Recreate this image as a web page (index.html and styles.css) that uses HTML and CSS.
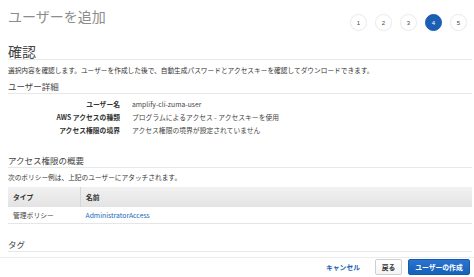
FILE: index.html
```html
<!DOCTYPE html>
<html>
<head>
  <title>ユーザーを追加</title>
  <link rel="stylesheet" href="styles.css">
</head>
<body>

  <div class="header">
    <h1>ユーザーを追加</h1>
    <div class="steps">
      <span class="step">1</span>
      <span class="step">2</span>
      <span class="step">3</span>
      <span class="step active">4</span>
      <span class="step">5</span>
    </div>
  </div>

  <div class="content">
    <h2>確認</h2>
    <p class="desc">選択内容を確認します。ユーザーを作成した後で、自動生成パスワードとアクセスキーを確認してダウンロードできます。</p>

    <h3>ユーザー詳細</h3>
    <div class="details">
      <div class="label">ユーザー名</div>
      <div class="value">amplify-cli-zuma-user</div>
      <div class="label">AWS アクセスの種類</div>
      <div class="value">プログラムによるアクセス - アクセスキーを使用</div>
      <div class="label">アクセス権限の境界</div>
      <div class="value">アクセス権限の境界が設定されていません</div>
    </div>

    <h3 class="perm">アクセス権限の概要</h3>
    <p class="desc small">次のポリシー例は、上記のユーザーにアタッチされます。</p>
    <table class="policies">
      <tr>
        <th class="col-type">タイプ</th>
        <th>名前</th>
      </tr>
      <tr>
        <td>管理ポリシー</td>
        <td><a href="#">AdministratorAccess</a></td>
      </tr>
    </table>

    <h3 class="tags">タグ</h3>
  </div>

  <div class="footer">
    <a href="#" class="cancel">キャンセル</a>
    <button class="btn back">戻る</button>
    <button class="btn primary">ユーザーの作成</button>
  </div>

</body>
</html>
```

FILE: styles.css
```css
body {
  margin: 0;
  font-family: "Noto Sans CJK JP", "Liberation Sans", sans-serif;
  color: #333;
  background: #fff;
  width: 474px;
  height: 277px;
  overflow: hidden;
}
.header {
  display: flex;
  justify-content: space-between;
  align-items: flex-start;
  height: 40px;
  padding: 0 7px 0 8px;
}
h1 {
  margin: 7px 0 0;
  font-size: 14px;
  line-height: 18px;
  font-weight: normal;
  color: #8c8c8c;
}
.steps {
  display: flex;
  gap: 8px;
  margin-top: 14px;
}
.step {
  box-sizing: border-box;
  width: 17px;
  height: 17px;
  border: 1px solid #ececec;
  border-radius: 50%;
  font-size: 6px;
  font-family: "Liberation Sans", sans-serif;
  display: flex;
  align-items: center;
  justify-content: center;
  color: #444;
  background: #fff;
  box-shadow: 0 0 1px #f2f2f2;
}
.step.active {
  background: #1a5fb4;
  border-color: #1a5fb4;
  color: #fff;
}
.content {
  padding: 0 2px 0 8px;
}
h2 {
  margin: 3px 0 0;
  font-size: 14px;
  line-height: 16px;
  font-weight: normal;
  color: #444;
  border-bottom: 1px solid #e8e8e8;
}
h3 {
  margin: 4px 0 0;
  font-size: 8.5px;
  line-height: 12px;
  font-weight: normal;
  color: #444;
  padding-bottom: 1px;
  border-bottom: 1px solid #e8e8e8;
}
.desc {
  margin: 4px 0 0;
  font-size: 6.7px;
  line-height: 12px;
  color: #333;
}
.desc.small {
  margin-top: 3px;
}
.details {
  display: grid;
  grid-template-columns: 112px 1fr;
  column-gap: 12px;
  row-gap: 2px;
  font-size: 6.8px;
  line-height: 11px;
  padding-top: 5px;
}
.label {
  text-align: right;
  font-weight: bold;
  color: #333;
}
.value {
  color: #444;
}
h3.perm {
  margin-top: 18px;
}
.policies {
  width: 100%;
  border-collapse: collapse;
  margin-top: 4px;
  font-size: 6.8px;
}
.policies th {
  background: linear-gradient(#f1f1f1, #e3e3e3);
  text-align: left;
  font-weight: bold;
  height: 20px;
  padding: 0 5px;
  color: #333;
}
.policies th.col-type {
  width: 62px;
  border-right: 1px solid #d6d6d6;
}
.policies td {
  height: 16px;
  padding: 0 5px;
  border-bottom: 1px solid #e6e6e6;
  color: #444;
}
.policies a {
  color: #1566b7;
  text-decoration: none;
}
h3.tags {
  margin-top: 14px;
}
.footer {
  margin-top: 5px;
  border-top: 1px solid #ececec;
  display: flex;
  justify-content: flex-end;
  align-items: center;
  padding: 1px 4px 0 0;
  font-size: 6.8px;
}
.cancel {
  color: #1a5fb4;
  text-decoration: none;
  font-weight: bold;
  margin-right: 15px;
}
.btn {
  box-sizing: border-box;
  font-family: inherit;
  font-size: 6.8px;
  font-weight: bold;
  height: 16px;
  padding: 0;
  border: 1px solid #cfcfcf;
  border-radius: 2px;
  background: linear-gradient(#fff, #f4f4f4);
  color: #333;
}
.btn.back {
  width: 27px;
  margin-right: 6px;
}
.btn.primary {
  width: 62px;
  background: linear-gradient(#2a74d0, #1760b8);
  border-color: #155aad;
  color: #fff;
}
```
